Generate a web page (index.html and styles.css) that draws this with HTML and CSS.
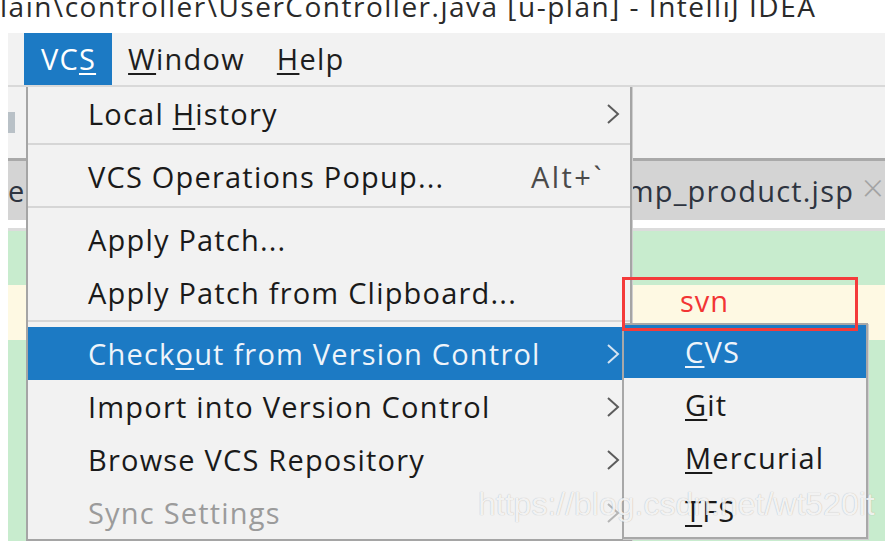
FILE: index.html
```html
<!DOCTYPE html>
<html>
<head>
<meta charset="utf-8">
<link rel="stylesheet" href="styles.css">
</head>
<body>
<div class="screen">
  <div class="title"><span class="title-text">lain\controller\UserController.java [u-plan] - IntelliJ IDEA</span></div>
  <div class="ide">
    <div class="menubar">
      <div class="mb-item active">VC<u>S</u></div>
      <div class="mb-item"><u>W</u>indow</div>
      <div class="mb-item"><u>H</u>elp</div>
    </div>
    <div class="toolbar"><div class="tool-btn"></div></div>
    <div class="tabs">
      <span class="tab tab-first">er</span>
      <span class="tab tab-second">emp_product.jsp<span class="close">×</span></span>
    </div>
    <div class="tab-gap"></div>
    <div class="editor">
      <div class="band green top"></div>
      <div class="band cream"></div>
      <div class="band green rest"></div>
    </div>
  </div>

  <div class="menu">
    <div class="row"><span class="label">Local <u>H</u>istory</span><svg class="arrow" width="14" height="22" viewBox="0 0 14 22"><polyline points="2,2 12,11 2,20"/></svg></div>
    <div class="sep s1"><div class="line"></div></div>
    <div class="row"><span class="label">VCS Operations Popup...</span><span class="shortcut">Alt+`</span></div>
    <div class="sep s2"><div class="line"></div></div>
    <div class="row"><span class="label">Apply Patch...</span></div>
    <div class="row"><span class="label">Apply Patch from Clipboard...</span></div>
    <div class="sep s3"><div class="line"></div></div>
    <div class="row selected"><span class="label">Check<u>o</u>ut from Version Control</span><svg class="arrow" width="14" height="22" viewBox="0 0 14 22"><polyline points="2,2 12,11 2,20"/></svg></div>
    <div class="row"><span class="label">Import into Version Control</span><svg class="arrow" width="14" height="22" viewBox="0 0 14 22"><polyline points="2,2 12,11 2,20"/></svg></div>
    <div class="row"><span class="label">Browse VCS Repository</span><svg class="arrow" width="14" height="22" viewBox="0 0 14 22"><polyline points="2,2 12,11 2,20"/></svg></div>
    <div class="row disabled"><span class="label">Sync Settings</span><svg class="arrow" width="14" height="22" viewBox="0 0 14 22"><polyline points="2,2 12,11 2,20"/></svg></div>
  </div>

  <div class="submenu">
    <div class="row selected"><span class="label"><u>C</u>VS</span></div>
    <div class="row"><span class="label"><u>G</u>it</span></div>
    <div class="row"><span class="label"><u>M</u>ercurial</span></div>
    <div class="row"><span class="label"><u>T</u>FS</span></div>
  </div>

  <div class="callout">svn</div>
  <div class="watermark">https://blog.csdn.net/wt520it</div>
</div>
</body>
</html>
```
FILE: styles.css
```css
html, body {
  margin: 0;
  padding: 0;
  background: #ffffff;
}
.screen {
  position: relative;
  width: 885px;
  height: 541px;
  overflow: hidden;
  font-family: "Open Sans", "Noto Sans", sans-serif;
}
u {
  text-decoration-thickness: 2px;
  text-underline-offset: 3px;
}
.title {
  height: 33px;
  overflow: hidden;
  white-space: nowrap;
}
.title-text {
  display: inline-block;
  font-size: 28px;
  line-height: 28px;
  letter-spacing: 1.5px;
  margin-top: -8px;
  color: #2a2a2a;
}
.ide {
  margin-left: 8px;
}
.menubar {
  height: 52px;
  background: #f2f2f2;
  border-bottom: 2px solid #d9d9d9;
  display: flex;
  padding-left: 16px;
}
.mb-item {
  font-size: 29px;
  letter-spacing: 1.2px;
  line-height: 52px;
  padding: 0 16px;
  color: #1e1e1e;
}
.mb-item.active {
  background: #1c7ac4;
  color: #ffffff;
  padding: 0 16px 0 17px;
}
.toolbar {
  height: 71px;
  background: #f2f2f2;
  padding-top: 25px;
  box-sizing: border-box;
}
.tool-btn {
  width: 7px;
  height: 21px;
  background: #b9c1c7;
}
.tabs {
  height: 59px;
  border-top: 3px solid #a9a9a9;
  background: #d4d4d4;
  display: flex;
  align-items: center;
  font-size: 29px;
  letter-spacing: 1.2px;
  color: #2e3440;
  white-space: nowrap;
}
.tab-first {
  width: 607px;
}
.close {
  color: #a3a3a3;
  margin-left: 8px;
  font-size: 38px;
  font-weight: 300;
  line-height: 30px;
}
.tab-gap {
  height: 8px;
  background: #ffffff;
  border-bottom: 3px solid #dcdcdc;
}
.band.green { background: #c8ecce; }
.band.cream { background: #fef9e3; height: 55px; }
.band.top { height: 54px; }
.band.rest { height: 220px; }

.menu {
  position: absolute;
  left: 26px;
  top: 87px;
  width: 602px;
  background: #f2f2f2;
  border-left: 2px solid #a5a5a5;
  border-right: 2px solid #a5a5a5;
  border-bottom: 2px solid #a5a5a5;
  box-shadow: 1px 0 0 #cfcfcf;
}
.row {
  height: 53px;
  display: flex;
  align-items: center;
  padding-left: 60px;
  padding-right: 10px;
  font-size: 29px;
  letter-spacing: 1.2px;
  color: #1a1a1a;
  white-space: nowrap;
}
.row .label {
  flex: 1;
}
.row .shortcut {
  color: #4a4a4a;
  letter-spacing: 2.5px;
  margin-right: 16px;
}
.arrow polyline {
  fill: none;
  stroke: #5c5c5c;
  stroke-width: 2;
}
.row.selected {
  background: #1c7ac4;
  color: #eef4fa;
}
.row.selected .arrow polyline {
  stroke: #d5e4f2;
}
.row.disabled {
  color: #9b9b9b;
}
.row.disabled .arrow polyline {
  stroke: #b5b5b5;
}
.sep .line {
  height: 2px;
  background: #d6d6d6;
}
.sep.s1, .sep.s2 {
  padding: 3px 0 5px;
}
.sep.s3 {
  padding: 1px 0 5px;
}
.submenu {
  position: absolute;
  left: 622px;
  top: 323px;
  width: 242px;
  background: #f2f2f2;
  border: 2px solid #a8a8a8;
  box-shadow: 1px 1px 0 #cfcfcf;
}
.submenu .row {
  padding-left: 61px;
}
.callout {
  position: absolute;
  left: 622px;
  top: 277px;
  width: 236px;
  height: 54px;
  box-sizing: border-box;
  border: 3px solid #f43b3b;
  padding-left: 55px;
  font-size: 29px;
  letter-spacing: 1px;
  line-height: 42px;
  color: #f23535;
}
.watermark {
  position: absolute;
  left: 478px;
  top: 486px;
  font-family: "Liberation Sans", Arial, sans-serif;
  font-size: 32px;
  line-height: 36px;
  color: rgba(255, 255, 255, 0.85);
  text-shadow: 0 0 1px rgba(0, 0, 0, 0.3);
  white-space: nowrap;
}
```
